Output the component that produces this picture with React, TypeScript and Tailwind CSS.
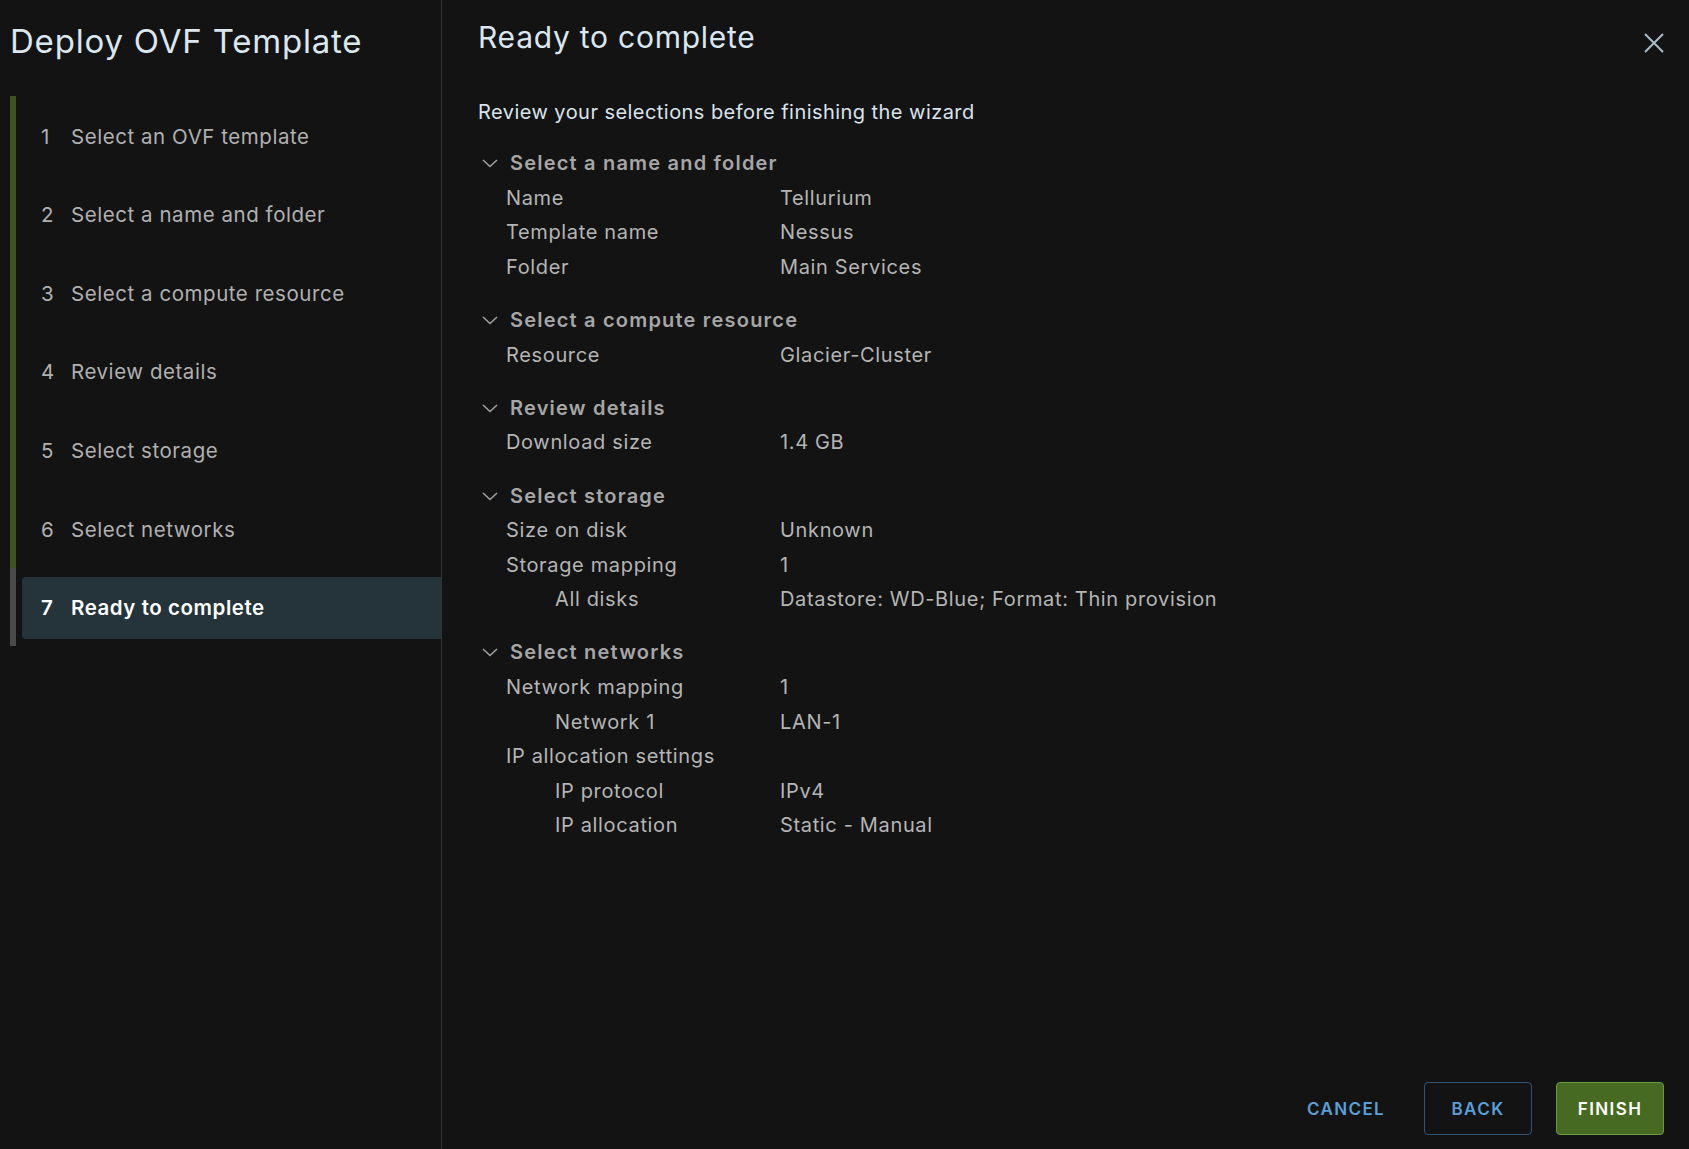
import { FC } from "react"

type Row = { label: string; value?: string; indent?: boolean }
type Section = { title: string; rows: Row[] }

const steps = [
  "Select an OVF template",
  "Select a name and folder",
  "Select a compute resource",
  "Review details",
  "Select storage",
  "Select networks",
  "Ready to complete",
]

const sections: Section[] = [
  {
    title: "Select a name and folder",
    rows: [
      { label: "Name", value: "Tellurium" },
      { label: "Template name", value: "Nessus" },
      { label: "Folder", value: "Main Services" },
    ],
  },
  {
    title: "Select a compute resource",
    rows: [{ label: "Resource", value: "Glacier-Cluster" }],
  },
  {
    title: "Review details",
    rows: [{ label: "Download size", value: "1.4 GB" }],
  },
  {
    title: "Select storage",
    rows: [
      { label: "Size on disk", value: "Unknown" },
      { label: "Storage mapping", value: "1" },
      { label: "All disks", value: "Datastore: WD-Blue; Format: Thin provision", indent: true },
    ],
  },
  {
    title: "Select networks",
    rows: [
      { label: "Network mapping", value: "1" },
      { label: "Network 1", value: "LAN-1", indent: true },
      { label: "IP allocation settings" },
      { label: "IP protocol", value: "IPv4", indent: true },
      { label: "IP allocation", value: "Static - Manual", indent: true },
    ],
  },
]

const Chevron: FC = () => (
  <svg width="18" height="18" viewBox="0 0 18 18" fill="none" className="shrink-0">
    <path d="M2 6 L9 12.5 L16 6" stroke="#a3a3a3" strokeWidth="1.5" />
  </svg>
)

const Sidebar: FC = () => (
  <aside className="w-[442px] shrink-0 border-r border-[#333333] flex flex-col">
    <h1 className="mt-[21px] pl-[10px] h-[40px] leading-[40px] text-[33px] text-[#dbe7ee] tracking-[0.8px]">
      Deploy OVF Template
    </h1>
    <ul className="mt-[35px]">
      {steps.map((step, i) => {
        const active = i === steps.length - 1
        return (
          <li key={step} className="flex h-[78.6px]">
            <span className={`ml-[10px] w-[6px] ${active ? "bg-[#4a4a4a]" : "bg-[#3b5322]"}`} />
            <div className="flex-1 pl-[6px] pt-[9px] pb-[7.6px]">
              <div
                className={`h-full flex items-center pl-[19px] pt-[2px] rounded-l-[4px] text-[20.5px] tracking-[0.55px] ${
                  active ? "bg-[#25333b] text-white font-semibold" : "text-[#b0b0b0]"
                }`}
              >
                <span className="w-[30px]">{i + 1}</span>
                <span>{step}</span>
              </div>
            </div>
          </li>
        )
      })}
    </ul>
  </aside>
)

const Summary: FC = () => (
  <div className="flex flex-col">
    {sections.map((section, si) => (
      <div key={section.title} className={si > 0 ? "mt-[18.5px]" : ""}>
        <div className="h-[34.6px] flex items-center gap-[11px] pl-[3px]">
          <Chevron />
          <span className="text-[20px] font-semibold text-[#a6a6a6] tracking-[1.2px]">{section.title}</span>
        </div>
        {section.rows.map((row) => (
          <div key={row.label} className="h-[34.6px] flex items-center text-[20px] tracking-[0.65px] text-[#b5b5b5]">
            <span className={`w-[302px] ${row.indent ? "pl-[77px]" : "pl-[28px]"}`}>{row.label}</span>
            <span>{row.value}</span>
          </div>
        ))}
      </div>
    ))}
  </div>
)

export default function App() {
  return (
    <div
      className="w-[1689px] h-[1149px] bg-[#131313] flex overflow-hidden"
      style={{ fontFamily: "Inter, 'Noto Sans', sans-serif" }}
    >
      <Sidebar />
      <main className="flex-1 flex flex-col pl-[36px] pr-[25px] relative">
        <button className="absolute right-[25px] top-[33px] w-[20px] h-[20px]" aria-label="Close">
          <svg width="20" height="20" viewBox="0 0 20 20" fill="none">
            <path d="M1 1 L19 19 M19 1 L1 19" stroke="#a9bcc8" strokeWidth="2" />
          </svg>
        </button>
        <h2 className="mt-[17px] h-[40px] leading-[40px] text-[30px] tracking-[0.75px] text-[#dbe7ee]">
          Ready to complete
        </h2>
        <p className="mt-[40px] h-[30px] leading-[30px] text-[20px] tracking-[0.45px] text-[#d9e4eb]">
          Review your selections before finishing the wizard
        </p>
        <div className="mt-[19px]">
          <Summary />
        </div>
        <div className="mt-auto mb-[14px] flex justify-end gap-[24px]">
          <button className="w-[108px] h-[53px] pt-[3px] text-[17px] font-semibold tracking-[1.4px] text-[#5a9fd6]">
            CANCEL
          </button>
          <button className="w-[108px] h-[53px] pt-[3px] rounded-[4px] border border-[#2e5678] text-[17px] font-semibold tracking-[1.4px] text-[#5a9fd6]">
            BACK
          </button>
          <button className="w-[108px] h-[53px] pt-[3px] rounded-[4px] border border-[#6a9a3a] bg-[#466a22] text-[17px] font-semibold tracking-[1.4px] text-white">
            FINISH
          </button>
        </div>
      </main>
    </div>
  )
}
